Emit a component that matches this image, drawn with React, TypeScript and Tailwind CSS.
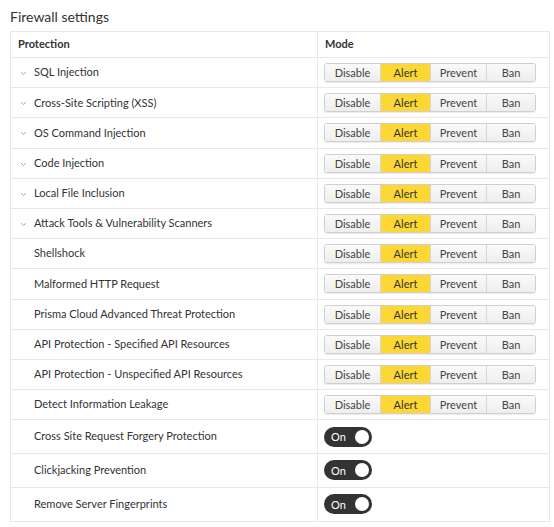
import React from "react"

type Row = {
  name: string
  expandable?: boolean
  kind: "mode" | "toggle"
}

const rows: Row[] = [
  { name: "SQL Injection", expandable: true, kind: "mode" },
  { name: "Cross-Site Scripting (XSS)", expandable: true, kind: "mode" },
  { name: "OS Command Injection", expandable: true, kind: "mode" },
  { name: "Code Injection", expandable: true, kind: "mode" },
  { name: "Local File Inclusion", expandable: true, kind: "mode" },
  { name: "Attack Tools & Vulnerability Scanners", expandable: true, kind: "mode" },
  { name: "Shellshock", kind: "mode" },
  { name: "Malformed HTTP Request", kind: "mode" },
  { name: "Prisma Cloud Advanced Threat Protection", kind: "mode" },
  { name: "API Protection - Specified API Resources", kind: "mode" },
  { name: "API Protection - Unspecified API Resources", kind: "mode" },
  { name: "Detect Information Leakage", kind: "mode" },
  { name: "Cross Site Request Forgery Protection", kind: "toggle" },
  { name: "Clickjacking Prevention", kind: "toggle" },
  { name: "Remove Server Fingerprints", kind: "toggle" },
]

const modes = [
  { label: "Disable", w: "w-[55px]" },
  { label: "Alert", w: "w-[50px]" },
  { label: "Prevent", w: "w-[56px]" },
  { label: "Ban", w: "w-[49px]" },
]

function Chevron() {
  return (
    <svg width="7" height="5" viewBox="0 0 7 5" className="mt-[2px] shrink-0">
      <path d="M1.2 1.2l2.3 2.3 2.3-2.3" fill="none" stroke="#999" strokeWidth="0.9" />
    </svg>
  )
}

function ModeSelect() {
  return (
    <div className="flex h-[19px] rounded-[3px] border border-[#cfcfcf] shadow-[0_1px_1px_rgba(0,0,0,0.08)]">
      {modes.map((m, i) => (
        <div
          key={m.label}
          className={`${m.w} flex items-center justify-center text-[11px] leading-none ${
            m.label === "Alert"
              ? "bg-[#fdd835] text-[#333]"
              : "bg-gradient-to-b from-[#fafafa] to-[#eeeeee] text-[#444]"
          } ${i > 0 ? "border-l border-[#d6d6d6]" : ""} ${i === 0 ? "rounded-l-[2px]" : ""} ${
            i === 3 ? "rounded-r-[2px]" : ""
          }`}
        >
          {m.label}
        </div>
      ))}
    </div>
  )
}

function Toggle() {
  return (
    <div className="flex h-[20px] w-[48px] items-center justify-between rounded-full bg-[#333] pl-[7px] pr-[3px]">
      <span className="text-[11px] leading-none text-white">On</span>
      <span className="h-[14px] w-[14px] rounded-full bg-white" />
    </div>
  )
}

export default function App() {
  return (
    <div
      className="h-[527px] w-[554px] bg-white pl-[10px] text-[#333]"
      style={{ fontFamily: "Lato, 'Open Sans', sans-serif" }}
    >
      <h1 className="pt-[8px] pb-[5px] text-[14px] leading-[18px] text-[#333]">Firewall settings</h1>
      <div className="w-[540px] border border-[#e8e8e8]">
        <div className="flex h-[26px] border-b border-[#e8e8e8] text-[11px] font-bold">
          <div className="flex w-[307px] items-center border-r border-[#e8e8e8] pl-[7px]">Protection</div>
          <div className="flex items-center pl-[7px]">Mode</div>
        </div>
        {rows.map((r) => (
          <div
            key={r.name}
            className={`flex border-b border-[#e8e8e8] last:border-b-0 ${
              r.kind === "mode" ? "h-[30.2px]" : "h-[33.7px]"
            }`}
          >
            <div className="flex w-[307px] items-center gap-[7px] border-r border-[#e8e8e8] pl-[9px] text-[11px]">
              {r.expandable ? <Chevron /> : <span className="w-[7px]" />}
              <span>{r.name}</span>
            </div>
            <div className="flex items-center pl-[6px]">
              {r.kind === "mode" ? <ModeSelect /> : <Toggle />}
            </div>
          </div>
        ))}
      </div>
    </div>
  )
}
